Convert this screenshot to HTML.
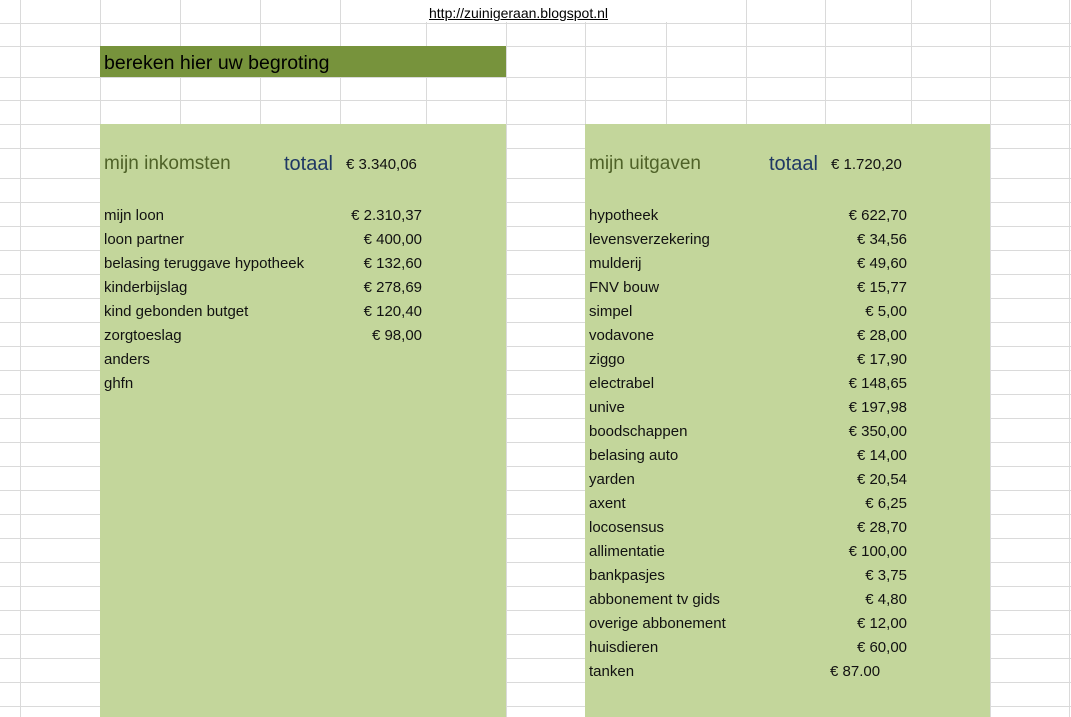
<!DOCTYPE html>
<html><head><meta charset="utf-8"><style>
html,body{margin:0;padding:0}
body{width:1071px;height:717px;position:relative;overflow:hidden;background:#fff;font-family:"Liberation Sans",sans-serif}
.h{position:absolute;left:0;width:1071px;height:1px;background:#dadada}
.v{position:absolute;top:0;height:717px;width:1px;background:#dadada}
.box{position:absolute;background:#c3d69b}
.t{position:absolute;white-space:nowrap;font-size:14.5px;color:#111;line-height:18px}
.r{text-align:right}
.hd{position:absolute;white-space:nowrap;font-size:19px;color:#4f6228;line-height:22px}
.tot{position:absolute;white-space:nowrap;font-size:20px;color:#1f3864;line-height:22px}
</style></head><body>
<div class="h" style="top:23px"></div><div class="h" style="top:46px"></div><div class="h" style="top:77px"></div><div class="h" style="top:100px"></div><div class="h" style="top:124px"></div><div class="h" style="top:148px"></div><div class="h" style="top:178px"></div><div class="h" style="top:202px"></div><div class="h" style="top:226px"></div><div class="h" style="top:250px"></div><div class="h" style="top:274px"></div><div class="h" style="top:298px"></div><div class="h" style="top:322px"></div><div class="h" style="top:346px"></div><div class="h" style="top:370px"></div><div class="h" style="top:394px"></div><div class="h" style="top:418px"></div><div class="h" style="top:442px"></div><div class="h" style="top:466px"></div><div class="h" style="top:490px"></div><div class="h" style="top:514px"></div><div class="h" style="top:538px"></div><div class="h" style="top:562px"></div><div class="h" style="top:586px"></div><div class="h" style="top:610px"></div><div class="h" style="top:634px"></div><div class="h" style="top:658px"></div><div class="h" style="top:682px"></div><div class="h" style="top:706px"></div>
<div class="v" style="left:20px"></div><div class="v" style="left:100px"></div><div class="v" style="left:180px"></div><div class="v" style="left:260px"></div><div class="v" style="left:340px"></div><div class="v" style="left:426px"></div><div class="v" style="left:506px"></div><div class="v" style="left:585px"></div><div class="v" style="left:666px"></div><div class="v" style="left:746px"></div><div class="v" style="left:825px"></div><div class="v" style="left:911px"></div><div class="v" style="left:990px"></div><div class="v" style="left:1069px"></div>
<div style="position:absolute;top:0;left:400px;width:275px;height:22px;background:#fff"></div>
<div class="t" style="left:429px;top:4px;font-size:14px;text-decoration:underline;color:#000">http://zuinigeraan.blogspot.nl</div>
<div style="position:absolute;left:100px;top:46px;width:406px;height:31px;background:#77933c"></div>
<div class="t" style="left:104px;top:52px;font-size:19.5px;line-height:22px;color:#000">bereken hier uw begroting</div>
<div class="box" style="left:100px;top:124px;width:406px;height:593px"></div>
<div class="box" style="left:585px;top:124px;width:405px;height:593px"></div>
<div class="hd" style="left:104px;top:153px">mijn inkomsten</div>
<div class="tot" style="left:284px;top:153px">totaal</div>
<div class="t" style="left:346px;top:156px;font-size:15px">€ 3.340,06</div>
<div class="hd" style="left:589px;top:153px">mijn uitgaven</div>
<div class="tot" style="left:769px;top:153px">totaal</div>
<div class="t" style="left:831px;top:156px;font-size:15px">€ 1.720,20</div>
<div class="t" style="left:104px;top:204px;line-height:24px;font-size:15px">mijn loon<br>loon partner<br>belasing teruggave hypotheek<br>kinderbijslag<br>kind gebonden butget<br>zorgtoeslag<br>anders<br>ghfn</div>
<div class="t r" style="left:322px;width:100px;top:204px;line-height:24px;font-size:15px">€ 2.310,37<br>€ 400,00<br>€ 132,60<br>€ 278,69<br>€ 120,40<br>€ 98,00</div>
<div class="t" style="left:589px;top:204px;line-height:24px;font-size:15px">hypotheek<br>levensverzekering<br>mulderij<br>FNV bouw<br>simpel<br>vodavone<br>ziggo<br>electrabel<br>unive<br>boodschappen<br>belasing auto<br>yarden<br>axent<br>locosensus<br>allimentatie<br>bankpasjes<br>abbonement tv gids<br>overige abbonement<br>huisdieren<br>tanken</div>
<div class="t r" style="left:807px;width:100px;top:204px;line-height:24px;font-size:15px">€ 622,70<br>€ 34,56<br>€ 49,60<br>€ 15,77<br>€ 5,00<br>€ 28,00<br>€ 17,90<br>€ 148,65<br>€ 197,98<br>€ 350,00<br>€ 14,00<br>€ 20,54<br>€ 6,25<br>€ 28,70<br>€ 100,00<br>€ 3,75<br>€ 4,80<br>€ 12,00<br>€ 60,00</div>
<div class="t" style="left:830px;top:663px;font-size:15px">€ 87.00</div>
</body></html>
